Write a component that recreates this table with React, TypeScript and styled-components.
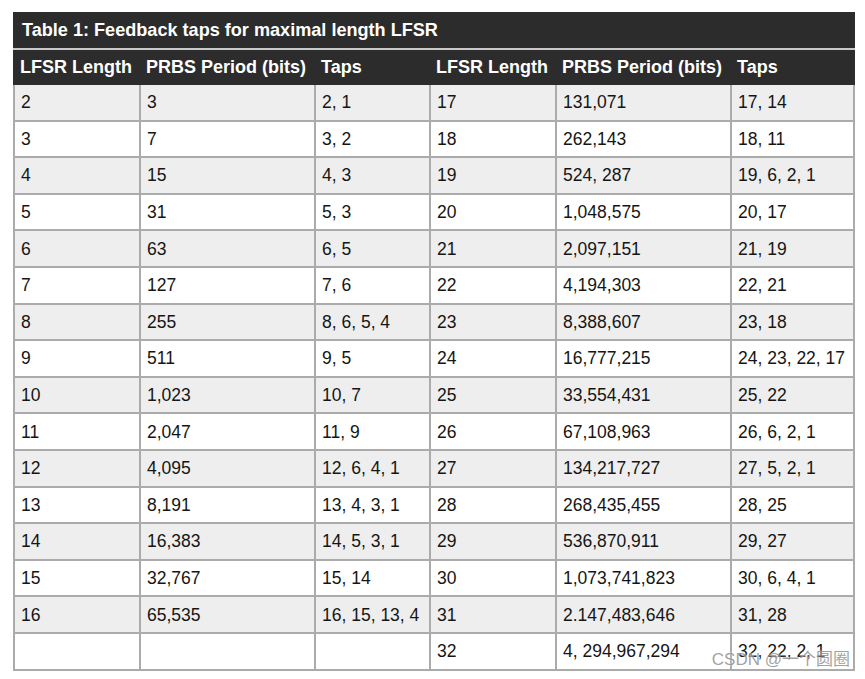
import styled, { createGlobalStyle } from "styled-components";

const GlobalStyle = createGlobalStyle`
  html, body {
    margin: 0;
    padding: 0;
    background: #ffffff;
  }
  body {
    font-family: "Liberation Sans", Arial, sans-serif;
  }
`;

const COLS = "124px 173px 113px 124px 173px 121px";

const rows: string[][] = [
  ["2", "3", "2, 1", "17", "131,071", "17, 14"],
  ["3", "7", "3, 2", "18", "262,143", "18, 11"],
  ["4", "15", "4, 3", "19", "524, 287", "19, 6, 2, 1"],
  ["5", "31", "5, 3", "20", "1,048,575", "20, 17"],
  ["6", "63", "6, 5", "21", "2,097,151", "21, 19"],
  ["7", "127", "7, 6", "22", "4,194,303", "22, 21"],
  ["8", "255", "8, 6, 5, 4", "23", "8,388,607", "23, 18"],
  ["9", "511", "9, 5", "24", "16,777,215", "24, 23, 22, 17"],
  ["10", "1,023", "10, 7", "25", "33,554,431", "25, 22"],
  ["11", "2,047", "11, 9", "26", "67,108,963", "26, 6, 2, 1"],
  ["12", "4,095", "12, 6, 4, 1", "27", "134,217,727", "27, 5, 2, 1"],
  ["13", "8,191", "13, 4, 3, 1", "28", "268,435,455", "28, 25"],
  ["14", "16,383", "14, 5, 3, 1", "29", "536,870,911", "29, 27"],
  ["15", "32,767", "15, 14", "30", "1,073,741,823", "30, 6, 4, 1"],
  ["16", "65,535", "16, 15, 13, 4", "31", "2.147,483,646", "31, 28"],
  ["", "", "", "32", "4, 294,967,294", "32, 22, 2, 1"],
];

const headers = ["LFSR Length", "PRBS Period (bits)", "Taps", "LFSR Length", "PRBS Period (bits)", "Taps"];

const Page = styled.div`
  padding: 12px 0 0 13px;
`;

const Frame = styled.div`
  position: relative;
  width: 842px;
`;

const TitleBar = styled.div`
  height: 36px;
  background: #2c2c2c;
  color: #ffffff;
  font-weight: 700;
  font-size: 18.1px;
  display: flex;
  align-items: center;
  padding-left: 9px;
  border-bottom: 2px solid #c8c8c8;
`;

const HeaderRow = styled.div`
  display: grid;
  grid-template-columns: ${COLS};
  column-gap: 2px;
  padding: 0 2px;
  height: 35px;
  background: #2c2c2c;
`;

const HeaderCell = styled.div`
  color: #ffffff;
  font-weight: 700;
  font-size: 18px;
  display: flex;
  align-items: center;
  padding-left: 5px;
  white-space: nowrap;
`;

const Body = styled.div`
  display: grid;
  grid-template-columns: ${COLS};
  grid-auto-rows: 34.6px;
  gap: 2px;
  padding: 0 2px 2px 2px;
  background: #ababab;
`;

const Cell = styled.div<{ $shade: boolean }>`
  background: ${(p) => (p.$shade ? "#eeeeee" : "#ffffff")};
  color: #151515;
  font-size: 17.5px;
  display: flex;
  align-items: center;
  padding-left: 6px;
  padding-top: 1px;
  white-space: nowrap;
  overflow: hidden;
`;

const Watermark = styled.div`
  position: absolute;
  right: 5px;
  bottom: 1px;
  font-size: 17px;
  color: rgba(130, 130, 130, 0.75);
  text-shadow: 0 0 2px rgba(255, 255, 255, 0.9);
  font-family: "Liberation Sans", "Noto Sans CJK SC", sans-serif;
  pointer-events: none;
`;

export default function App() {
  return (
    <Page>
      <GlobalStyle />
      <Frame>
        <TitleBar>Table 1: Feedback taps for maximal length LFSR</TitleBar>
        <HeaderRow>
          {headers.map((h, i) => (
            <HeaderCell key={i}>{h}</HeaderCell>
          ))}
        </HeaderRow>
        <Body>
          {rows.map((r, ri) =>
            r.map((c, ci) => (
              <Cell key={`${ri}-${ci}`} $shade={ri % 2 === 0}>
                {c}
              </Cell>
            ))
          )}
        </Body>
        <Watermark>CSDN @一个圆圈</Watermark>
      </Frame>
    </Page>
  );
}
